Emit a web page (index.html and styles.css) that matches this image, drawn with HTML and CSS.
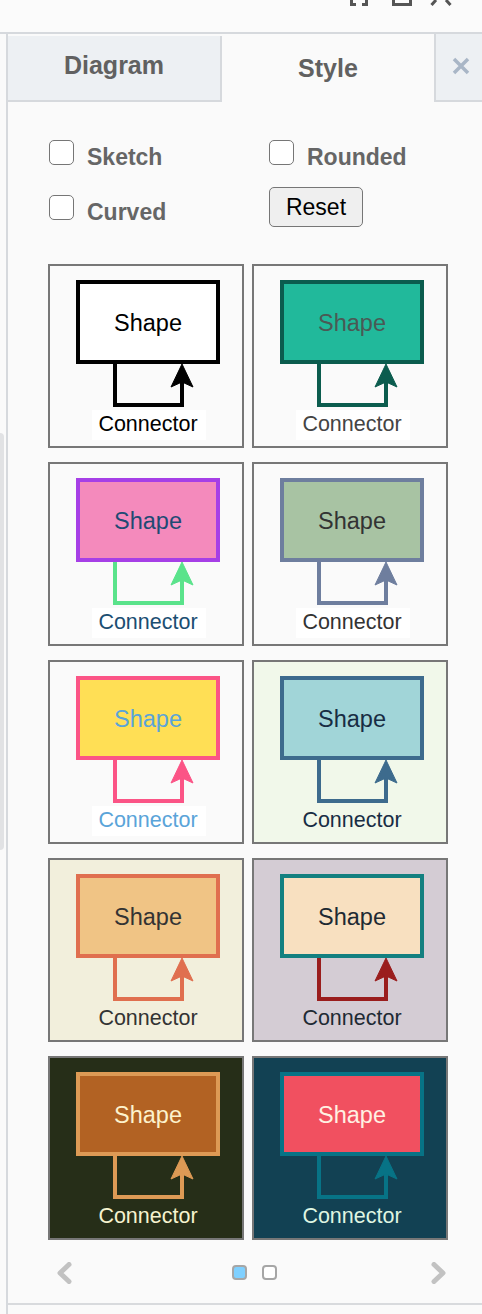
FILE: index.html
```html
<!DOCTYPE html>
<html>
<head>
<meta charset="utf-8">
<link rel="stylesheet" href="styles.css">
</head>
<body>
<div class="topbar">
  <svg class="ticon i-full" width="18" height="6" viewBox="0 0 18 6"><path d="M1.5 0 V4.5 H6 M12 4.5 H16.5 V0"/></svg>
  <svg class="ticon i-win" width="20" height="6" viewBox="0 0 20 6"><path d="M1.5 0 V4.5 H18.5 V0"/></svg>
  <svg class="ticon i-close" width="22" height="6" viewBox="0 0 22 6"><path d="M6 0 L1.5 5 M16 0 L20.5 5"/></svg>
</div>
<div class="main">
  <div class="gutter"><div class="thumb"></div></div>
  <div class="panel">
    <div class="tabs">
      <div class="tab tab-diagram">Diagram</div>
      <div class="tab tab-style">Style</div>
      <div class="tab tab-close"><svg class="xicon" width="18" height="18" viewBox="0 0 18 18"><path d="M2 2 L16 16 M16 2 L2 16"/></svg></div>
    </div>
    <div class="content">
      <div class="options">
        <label class="opt"><input type="checkbox" class="cb"><span>Sketch</span></label>
        <label class="opt"><input type="checkbox" class="cb"><span>Rounded</span></label>
        <label class="opt"><input type="checkbox" class="cb"><span>Curved</span></label>
        <div class="opt"><button class="reset">Reset</button></div>
      </div>
      <div class="tiles">
        <div class="tile t1"><svg class="art" viewBox="0 0 192 180" width="192" height="180"><rect class="shape" x="28" y="16" width="140" height="80"/><text class="stext" x="98" y="65">Shape</text><path class="edge" d="M65 98 V139 H132 V114"/><path class="arrow" d="M132 98 L121 121 L132 116 L143 121 Z"/><rect class="lbg" x="42" y="144" width="114" height="30"/><text class="ltext" x="98" y="165">Connector</text></svg></div>
        <div class="tile t2"><svg class="art" viewBox="0 0 192 180" width="192" height="180"><rect class="shape" x="28" y="16" width="140" height="80"/><text class="stext" x="98" y="65">Shape</text><path class="edge" d="M65 98 V139 H132 V114"/><path class="arrow" d="M132 98 L121 121 L132 116 L143 121 Z"/><rect class="lbg" x="42" y="144" width="114" height="30"/><text class="ltext" x="98" y="165">Connector</text></svg></div>
        <div class="tile t3"><svg class="art" viewBox="0 0 192 180" width="192" height="180"><rect class="shape" x="28" y="16" width="140" height="80"/><text class="stext" x="98" y="65">Shape</text><path class="edge" d="M65 98 V139 H132 V114"/><path class="arrow" d="M132 98 L121 121 L132 116 L143 121 Z"/><rect class="lbg" x="42" y="144" width="114" height="30"/><text class="ltext" x="98" y="165">Connector</text></svg></div>
        <div class="tile t4"><svg class="art" viewBox="0 0 192 180" width="192" height="180"><rect class="shape" x="28" y="16" width="140" height="80"/><text class="stext" x="98" y="65">Shape</text><path class="edge" d="M65 98 V139 H132 V114"/><path class="arrow" d="M132 98 L121 121 L132 116 L143 121 Z"/><rect class="lbg" x="42" y="144" width="114" height="30"/><text class="ltext" x="98" y="165">Connector</text></svg></div>
        <div class="tile t5"><svg class="art" viewBox="0 0 192 180" width="192" height="180"><rect class="shape" x="28" y="16" width="140" height="80"/><text class="stext" x="98" y="65">Shape</text><path class="edge" d="M65 98 V139 H132 V114"/><path class="arrow" d="M132 98 L121 121 L132 116 L143 121 Z"/><rect class="lbg" x="42" y="144" width="114" height="30"/><text class="ltext" x="98" y="165">Connector</text></svg></div>
        <div class="tile t6"><svg class="art" viewBox="0 0 192 180" width="192" height="180"><rect class="shape" x="28" y="16" width="140" height="80"/><text class="stext" x="98" y="65">Shape</text><path class="edge" d="M65 98 V139 H132 V114"/><path class="arrow" d="M132 98 L121 121 L132 116 L143 121 Z"/><rect class="lbg" x="42" y="144" width="114" height="30"/><text class="ltext" x="98" y="165">Connector</text></svg></div>
        <div class="tile t7"><svg class="art" viewBox="0 0 192 180" width="192" height="180"><rect class="shape" x="28" y="16" width="140" height="80"/><text class="stext" x="98" y="65">Shape</text><path class="edge" d="M65 98 V139 H132 V114"/><path class="arrow" d="M132 98 L121 121 L132 116 L143 121 Z"/><rect class="lbg" x="42" y="144" width="114" height="30"/><text class="ltext" x="98" y="165">Connector</text></svg></div>
        <div class="tile t8"><svg class="art" viewBox="0 0 192 180" width="192" height="180"><rect class="shape" x="28" y="16" width="140" height="80"/><text class="stext" x="98" y="65">Shape</text><path class="edge" d="M65 98 V139 H132 V114"/><path class="arrow" d="M132 98 L121 121 L132 116 L143 121 Z"/><rect class="lbg" x="42" y="144" width="114" height="30"/><text class="ltext" x="98" y="165">Connector</text></svg></div>
        <div class="tile t9"><svg class="art" viewBox="0 0 192 180" width="192" height="180"><rect class="shape" x="28" y="16" width="140" height="80"/><text class="stext" x="98" y="65">Shape</text><path class="edge" d="M65 98 V139 H132 V114"/><path class="arrow" d="M132 98 L121 121 L132 116 L143 121 Z"/><rect class="lbg" x="42" y="144" width="114" height="30"/><text class="ltext" x="98" y="165">Connector</text></svg></div>
        <div class="tile t10"><svg class="art" viewBox="0 0 192 180" width="192" height="180"><rect class="shape" x="28" y="16" width="140" height="80"/><text class="stext" x="98" y="65">Shape</text><path class="edge" d="M65 98 V139 H132 V114"/><path class="arrow" d="M132 98 L121 121 L132 116 L143 121 Z"/><rect class="lbg" x="42" y="144" width="114" height="30"/><text class="ltext" x="98" y="165">Connector</text></svg></div>
      </div>
      <div class="pager">
        <svg class="chev" width="18" height="22" viewBox="0 0 18 22"><path d="M14 2.5 L5 11 L14 19.5"/></svg>
        <div class="dots"><span class="dot active"></span><span class="dot"></span></div>
        <svg class="chev" width="18" height="22" viewBox="0 0 18 22"><path d="M4 2.5 L13 11 L4 19.5"/></svg>
      </div>
    </div>
  </div>
</div>
</body>
</html>
```

FILE: styles.css
```css
html, body {
  margin: 0;
  padding: 0;
  background: #fafafa;
  font-family: "Liberation Sans", Arial, sans-serif;
}

.topbar {
  height: 32px;
  border-bottom: 2px solid #d6d9dd;
  display: flex;
  justify-content: flex-end;
  align-items: flex-start;
  padding-right: 30px;
  background: #fbfbfb;
}
.ticon path {
  fill: none;
  stroke: #555;
  stroke-width: 3;
}
.i-full { margin-right: 24px; }
.i-win { margin-right: 18px; }

.main {
  display: flex;
  align-items: stretch;
}
.gutter {
  width: 6px;
  flex: none;
}
.thumb {
  margin-top: 399px;
  width: 4px;
  height: 417px;
  background: #e1e2e4;
  border-radius: 0 4px 4px 0;
}

.panel {
  flex: 1;
  border-left: 2px solid #d6d9dd;
  background: #fafafa;
  min-height: 1280px;
}

.tabs {
  display: flex;
  height: 68px;
}
.tab {
  display: flex;
  align-items: center;
  justify-content: center;
  font-weight: bold;
  font-size: 25px;
  color: #616161;
  box-sizing: border-box;
}
.tab-diagram {
  width: 214px;
  margin-top: 2px;
  height: 66px;
  background: #edf0f3;
  border-right: 2px solid #d6d9dd;
  border-bottom: 2px solid #d6d9dd;
  padding-bottom: 5px;
}
.tab-style {
  flex: 1;
  background: #fafafa;
  padding-top: 1px;
}
.tab-close {
  width: 48px;
  height: 68px;
  background: #edf0f3;
  border-left: 2px solid #d6d9dd;
  border-bottom: 2px solid #d6d9dd;
  padding: 0 0 2px 4px;
}
.xicon path {
  fill: none;
  stroke: #a9b6c6;
  stroke-width: 3.5;
}

.content {
  padding: 38px 0 0 40px;
}

.options {
  display: grid;
  grid-template-columns: 220px 160px;
  grid-template-rows: 25px 40px;
  row-gap: 22px;
  padding-left: 1px;
}
.opt {
  display: flex;
  align-items: center;
  font-weight: bold;
  font-size: 23px;
  color: #666;
}
.cb {
  appearance: none;
  -webkit-appearance: none;
  margin: 0 13px 0 0;
  width: 25px;
  height: 25px;
  border: 1.5px solid #767676;
  border-radius: 5px;
  background: #fff;
  box-sizing: border-box;
  flex: none;
}
.opt span {
  position: relative;
  top: 5px;
}
.reset {
  width: 94px;
  height: 40px;
  font-family: "Liberation Sans", Arial, sans-serif;
  font-size: 23px;
  color: #000;
  background: #efefef;
  border: 1.5px solid #767676;
  border-radius: 5px;
  padding: 0;
}

.tiles {
  margin-top: 37px;
  display: grid;
  grid-template-columns: 196px 196px;
  grid-auto-rows: 184px;
  column-gap: 8px;
  row-gap: 14px;
}
.tile {
  border: 2px solid #777;
  box-sizing: border-box;
  background: var(--bg);
}
.art { display: block; }
.art .shape { fill: var(--fill); stroke: var(--stroke); stroke-width: 4; }
.art .stext { fill: var(--stext); font-size: 23.5px; text-anchor: middle; font-family: "Liberation Sans", Arial, sans-serif; }
.art .edge { fill: none; stroke: var(--edge); stroke-width: 4; }
.art .arrow { fill: var(--edge); stroke: var(--edge); stroke-width: 1; stroke-linejoin: miter; }
.art .lbg { fill: var(--lbg); }
.art .ltext { fill: var(--ltext); font-size: 21.5px; text-anchor: middle; font-family: "Liberation Sans", Arial, sans-serif; }

.t1 { --bg: #fafafa; --fill: #ffffff; --stroke: #000; --stext: #000; --edge: #000; --lbg: #fff; --ltext: #000; }
.t2 { --bg: #fafafa; --fill: #21b99b; --stroke: #0b5c4e; --stext: #4a5955; --edge: #0b5c4e; --lbg: #fff; --ltext: #444; }
.t3 { --bg: #fafafa; --fill: #f48abc; --stroke: #a63fe6; --stext: #1f4a74; --edge: #5ae38b; --lbg: #fff; --ltext: #1b4e72; }
.t4 { --bg: #fafafa; --fill: #a8c3a3; --stroke: #6e7e9e; --stext: #333; --edge: #6e7e9e; --lbg: #fff; --ltext: #333; }
.t5 { --bg: #fafafa; --fill: #ffdf55; --stroke: #fb5486; --stext: #5aa4d9; --edge: #fb5486; --lbg: #fff; --ltext: #5aa4d9; }
.t6 { --bg: #f1f8ea; --fill: #a1d5d8; --stroke: #3d6b8d; --stext: #182d44; --edge: #3d6b8d; --lbg: transparent; --ltext: #182d44; }
.t7 { --bg: #f2efdc; --fill: #f0c485; --stroke: #e06f4f; --stext: #333; --edge: #e06f4f; --lbg: transparent; --ltext: #333; }
.t8 { --bg: #d4ccd4; --fill: #f8e0c0; --stroke: #138080; --stext: #1e2a33; --edge: #9a1d1d; --lbg: transparent; --ltext: #1e2a33; }
.t9 { --bg: #262e18; --fill: #b26223; --stroke: #dd9a55; --stext: #fdf2cc; --edge: #dd9a55; --lbg: transparent; --ltext: #f6f3cf; }
.t10 { --bg: #124153; --fill: #f15060; --stroke: #077386; --stext: #fff0e2; --edge: #077386; --lbg: transparent; --ltext: #dff5e2; }

.pager {
  height: 61px;
  border-bottom: 2px solid #d8dadd;
  margin-left: -40px;
  padding: 2px 34px 0 47px;
  display: flex;
  align-items: center;
  justify-content: space-between;
}
.chev path {
  fill: none;
  stroke: #c2c2c2;
  stroke-width: 5;
  stroke-linejoin: round;
  stroke-linecap: round;
}
.dots {
  display: flex;
  gap: 15px;
  margin-left: 6px;
}
.dot {
  width: 15px;
  height: 15px;
  box-sizing: border-box;
  border: 2px solid #a6a6a6;
  border-radius: 4px;
  background: #fff;
}
.dot.active {
  background: #7fd0ff;
}
```
